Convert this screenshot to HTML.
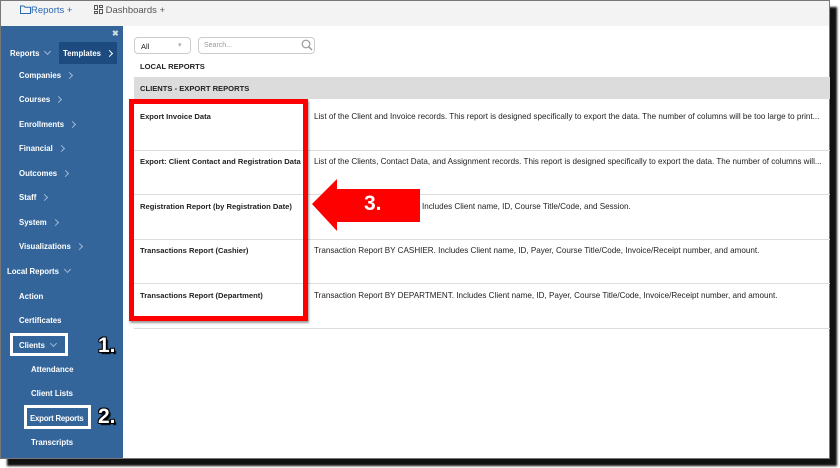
<!DOCTYPE html>
<html><head><meta charset="utf-8"><style>
*{margin:0;padding:0;box-sizing:border-box}
body{width:840px;height:468px;background:#fff;position:relative;overflow:hidden;font-family:"Liberation Sans",sans-serif}
.a{position:absolute}
.frame{left:0;top:0;width:830px;height:459px;border:1px solid #777;background:#fff;box-shadow:7px 7px 2px #111}
.top{left:1px;top:1px;width:828px;height:25px;background:#f3f3f3}
.side{left:1px;top:26px;width:122px;height:432px;background:#34659a}
.sl{position:absolute;color:#fff;font-size:7.8px;font-weight:bold;white-space:nowrap}
.cr,.cd{display:inline-block;width:5px;height:5px;border-right:1px solid #9fb8d6;border-top:1px solid #9fb8d6;margin-left:6px}
.cr{transform:rotate(45deg);vertical-align:0}
.cd{transform:rotate(135deg);vertical-align:2px}
.t{position:absolute;font-size:8.1px;color:#222;white-space:nowrap}
.b{font-weight:bold;font-size:7.6px}
.hl{position:absolute;left:134px;width:696px;height:1px;background:#ddd}
.num{position:absolute;color:#fff;font-weight:bold;font-size:21px;text-shadow:1px 1px 0 #000,-1px -1px 0 #000,1px -1px 0 #000,-1px 1px 0 #000,2px 2px 1px #000}
</style></head><body>
<div class="a frame"></div>
<div class="a top"></div>
<div class="t" style="left:20px;top:5px;font-size:9.5px;color:#2a6ab0">
<svg width="11" height="9" viewBox="0 0 11 9" style="vertical-align:-1px"><path d="M0.5 1h3.5l1 1.2h5.5v6.3h-10z" fill="none" stroke="#2a6ab0"/></svg>Reports +</div>
<div class="t" style="left:94px;top:5px;font-size:9.5px;color:#555">
<svg width="9" height="9" viewBox="0 0 9 9" style="vertical-align:-1px"><g fill="none" stroke="#555"><rect x=".5" y=".5" width="3" height="4"/><rect x="5.5" y=".5" width="3" height="2"/><rect x="5.5" y="4.5" width="3" height="4"/><rect x=".5" y="6.5" width="3" height="2"/></g></svg> Dashboards +</div>
<div class="a side"></div>
<div class="sl" style="left:112px;top:29px;color:#cdd;font-size:8px">✖</div>
<div class="a" style="left:59px;top:42px;width:58px;height:22px;background:#1d4a7f"></div>
<div class="sl" style="left:10px;top:49px">Reports<span class="cd"></span></div>
<div class="sl" style="left:63px;top:49px">Templates<span class="cr" style="border-color:#fff"></span></div>
<div class="sl" style="left:19px;top:71px">Companies<span class="cr"></span></div>
<div class="sl" style="left:19px;top:95px">Courses<span class="cr"></span></div>
<div class="sl" style="left:19px;top:120px">Enrollments<span class="cr"></span></div>
<div class="sl" style="left:19px;top:144px">Financial<span class="cr"></span></div>
<div class="sl" style="left:19px;top:169px">Outcomes<span class="cr"></span></div>
<div class="sl" style="left:19px;top:193px">Staff<span class="cr"></span></div>
<div class="sl" style="left:19px;top:218px">System<span class="cr"></span></div>
<div class="sl" style="left:19px;top:242px">Visualizations<span class="cr"></span></div>
<div class="sl" style="left:7px;top:267px">Local Reports<span class="cd"></span></div>
<div class="sl" style="left:19px;top:292px">Action</div>
<div class="sl" style="left:19px;top:316px">Certificates</div>
<div class="a" style="left:10px;top:333px;width:58px;height:23px;border:3px solid #fff"></div>
<div class="sl" style="left:19px;top:341px">Clients<span class="cd"></span></div>
<div class="sl" style="left:31px;top:365px">Attendance</div>
<div class="sl" style="left:31px;top:389px">Client Lists</div>
<div class="a" style="left:24px;top:405px;width:67px;height:24px;border:3px solid #fff"></div>
<div class="sl" style="left:30px;top:414px;letter-spacing:-0.2px">Export Reports</div>
<div class="sl" style="left:31px;top:438px">Transcripts</div>
<div class="num" style="left:98px;top:334px">1.</div>
<div class="num" style="left:98px;top:405px">2.</div>

<div class="a" style="left:134px;top:37px;width:57px;height:17px;border:1px solid #ccc;border-radius:4px"></div>
<div class="t" style="left:141px;top:42px;font-size:7.5px">All</div>
<div class="t" style="left:178px;top:41px;color:#aaa;font-size:7px">▾</div>
<div class="a" style="left:198px;top:37px;width:117px;height:17px;border:1px solid #ccc;border-radius:4px"></div>
<div class="t" style="left:204px;top:42px;color:#999;font-size:7px">Search...</div>
<svg class="a" style="left:301px;top:39px" width="12" height="12" viewBox="0 0 12 12"><circle cx="5" cy="5" r="3.8" fill="none" stroke="#999" stroke-width="1.2"/><path d="M8 8l3 3" stroke="#999" stroke-width="1.4"/></svg>
<div class="t b" style="left:140px;top:62px">LOCAL REPORTS</div>
<div class="a" style="left:134px;top:77px;width:696px;height:22px;background:#dcdcdc"></div>
<div class="t b" style="left:140px;top:84px">CLIENTS - EXPORT REPORTS</div>
<div class="hl" style="top:150px"></div>
<div class="hl" style="top:194px"></div>
<div class="hl" style="top:239px"></div>
<div class="hl" style="top:283px"></div>
<div class="hl" style="top:328px"></div>
<div class="t b" style="left:140px;top:112px">Export Invoice Data</div>
<div class="t b" style="left:140px;top:157px">Export: Client Contact and Registration Data</div>
<div class="t b" style="left:140px;top:202px">Registration Report (by Registration Date)</div>
<div class="t b" style="left:140px;top:246px">Transactions Report (Cashier)</div>
<div class="t b" style="left:140px;top:291px">Transactions Report (Department)</div>
<div class="t" style="left:314px;top:112px">List of the Client and Invoice records. This report is designed specifically to export the data. The number of columns will be too large to print...</div>
<div class="t" style="left:314px;top:157px">List of the Clients, Contact Data, and Assignment records. This report is designed specifically to export the data. The number of columns will...</div>
<div class="t" style="left:422px;top:202px">Includes Client name, ID, Course Title/Code, and Session.</div>
<div class="t" style="left:314px;top:246px">Transaction Report BY CASHIER. Includes Client name, ID, Payer, Course Title/Code, Invoice/Receipt number, and amount.</div>
<div class="t" style="left:314px;top:291px">Transaction Report BY DEPARTMENT. Includes Client name, ID, Payer, Course Title/Code, Invoice/Receipt number, and amount.</div>
<div class="a" style="left:129px;top:99px;width:179px;height:222px;border:5px solid #f00;box-shadow:1px 2px 2px rgba(0,0,0,.4)"></div>
<svg class="a" style="left:310px;top:178px" width="112" height="54" viewBox="0 0 112 54"><path d="M2 26L27 1V11H110V44H27V53Z" fill="#f00"/></svg>
<div class="num" style="left:364px;top:192px;text-shadow:none;font-size:21px">3.</div>
</body></html>
